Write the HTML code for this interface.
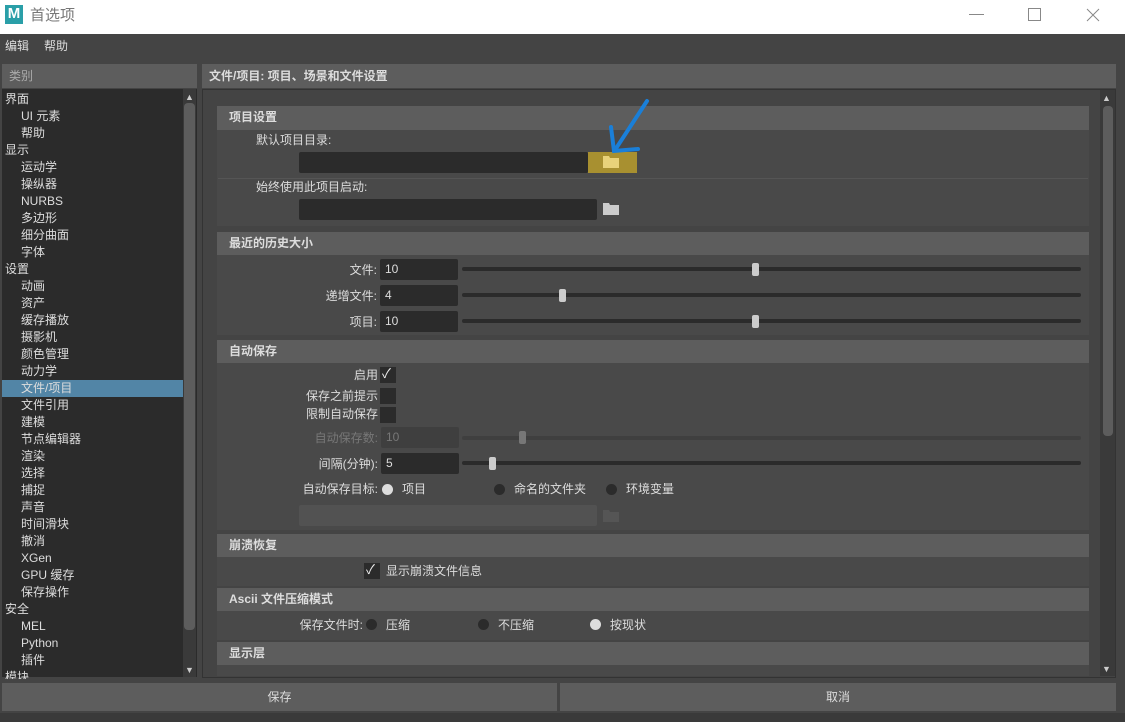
<!DOCTYPE html>
<html><head><meta charset="utf-8"><style>
*{margin:0;padding:0;box-sizing:border-box}
body{width:1125px;height:722px;background:#444;position:relative;overflow:hidden;font-family:"Liberation Sans","Noto Sans CJK SC",sans-serif;font-size:12px;color:#ddd}
.a{position:absolute}
.t{position:absolute;white-space:nowrap;line-height:14px}
.hdr{position:absolute;background:#5d5d5d;font-weight:bold;color:#ddd;padding-left:12px;line-height:23px}
.body{position:absolute;background:#494949}
.fld{position:absolute;background:#2b2b2b;border-radius:2px;padding-left:5px;line-height:21px;color:#ddd}
.trk{position:absolute;height:4px;background:#2b2b2b;border-radius:2px}
.th{position:absolute;width:7px;height:13px;background:#ccc;border-radius:2px}
.cb{position:absolute;width:16px;height:16px;background:#2b2b2b}
.rd{position:absolute;width:11px;height:11px;border-radius:50%;background:#2b2b2b}
.r{text-align:right}
</style></head><body>
<div class="a" style="left:0;top:0;width:1125px;height:34px;background:#fff"></div>
<div class="a" style="left:5px;top:5px;width:18px;height:19px;background:#2a9fa8;color:#fff;font-weight:bold;font-size:15px;line-height:17px;text-align:center">M</div>
<div class="t" style="left:30px;top:7px;font-size:15px;line-height:18px;color:#777">首选项</div>
<svg class="a" style="left:960px;top:0" width="165" height="34"><g stroke="#888" stroke-width="1" fill="none"><path d="M9 14.5 H24"/><rect x="68.5" y="8.5" width="12" height="12"/><path d="M127 9 L139 21 M139 9 L127 21"/></g></svg>
<div class="t" style="left:5px;top:39px">编辑</div><div class="t" style="left:44px;top:39px">帮助</div>

<div class="a" style="left:2px;top:64px;width:195px;height:24px;background:#5d5d5d"></div>
<div class="t" style="left:9px;top:69px;color:#aaa">类别</div>
<div class="a" style="left:2px;top:89px;width:195px;height:588px;background:#2b2b2b"></div>
<div class="a" style="left:2px;top:380px;width:181px;height:17px;background:#5285a6"></div>
<div class="a" style="left:183px;top:89px;width:13px;height:588px;background:#3a3a3a"></div>
<div class="a" style="left:184px;top:103px;width:11px;height:527px;background:#5d5d5d;border-radius:4px"></div>
<div class="t" style="left:185px;top:90px;font-size:9px;color:#ccc">▲</div>
<div class="t" style="left:185px;top:663px;font-size:9px;color:#ccc">▼</div>
<div id="list"></div>

<div class="a" style="left:202px;top:64px;width:914px;height:24px;background:#5d5d5d"></div>
<div class="t" style="left:209px;top:69px;font-weight:bold">文件/项目: 项目、场景和文件设置</div>
<div class="a" style="left:202px;top:89px;width:914px;height:589px;border:1px solid #333;background:#444"></div>
<div class="a" style="left:1100px;top:90px;width:15px;height:586px;background:#3a3a3a"></div>
<div class="a" style="left:1103px;top:106px;width:10px;height:330px;background:#5d5d5d;border-radius:4px"></div>
<div class="t" style="left:1102px;top:91px;font-size:9px;color:#ccc">▲</div>
<div class="t" style="left:1102px;top:662px;font-size:9px;color:#ccc">▼</div>

<div class="hdr" style="left:217px;top:106px;width:872px;height:24px">项目设置</div>
<div class="body" style="left:217px;top:130px;width:872px;height:96px"></div>
<div class="t" style="left:256px;top:133px">默认项目目录:</div>
<div class="fld" style="left:299px;top:152px;width:289px;height:21px"></div>
<div class="a" style="left:588px;top:152px;width:49px;height:21px;background:#a89030"></div>
<svg class="a" style="left:603px;top:154px" width="17" height="15"><path d="M0 2 H6 L7 4 H16 V14 H0 Z" fill="#e8d27a"/></svg>
<div class="a" style="left:218px;top:178px;width:870px;height:1px;background:#555"></div>
<div class="t" style="left:256px;top:180px">始终使用此项目启动:</div>
<div class="fld" style="left:299px;top:199px;width:298px;height:21px"></div>
<svg class="a" style="left:603px;top:201px" width="17" height="15"><path d="M0 2 H6 L7 4 H16 V14 H0 Z" fill="#ccc"/></svg>

<div class="hdr" style="left:217px;top:232px;width:872px;height:23px">最近的历史大小</div>
<div class="body" style="left:217px;top:255px;width:872px;height:80px"></div>
<div class="t r" style="left:300px;top:263px;width:77px">文件:</div>
<div class="fld" style="left:380px;top:259px;width:78px;height:21px">10</div>
<div class="trk" style="left:462px;top:267px;width:619px"></div><div class="th" style="left:752px;top:263px"></div>
<div class="t r" style="left:300px;top:289px;width:77px">递增文件:</div>
<div class="fld" style="left:380px;top:285px;width:78px;height:21px">4</div>
<div class="trk" style="left:462px;top:293px;width:619px"></div><div class="th" style="left:559px;top:289px"></div>
<div class="t r" style="left:300px;top:315px;width:77px">项目:</div>
<div class="fld" style="left:380px;top:311px;width:78px;height:21px">10</div>
<div class="trk" style="left:462px;top:319px;width:619px"></div><div class="th" style="left:752px;top:315px"></div>

<div class="hdr" style="left:217px;top:340px;width:872px;height:23px">自动保存</div>
<div class="body" style="left:217px;top:363px;width:872px;height:167px"></div>
<div class="t r" style="left:280px;top:368px;width:98px">启用</div>
<div class="cb" style="left:380px;top:367px"></div><div class="t" style="left:382px;top:367px;font-size:13px;color:#eee">✓</div>
<div class="t r" style="left:280px;top:389px;width:98px">保存之前提示</div>
<div class="cb" style="left:380px;top:388px"></div>
<div class="t r" style="left:280px;top:407px;width:98px">限制自动保存</div>
<div class="cb" style="left:380px;top:407px"></div>
<div class="t r" style="left:280px;top:431px;width:98px;color:#777">自动保存数:</div>
<div class="fld" style="left:381px;top:427px;width:78px;height:21px;background:#3f3f3f;color:#777">10</div>
<div class="trk" style="left:462px;top:436px;width:619px;background:#3f3f3f"></div><div class="th" style="left:519px;top:431px;background:#777"></div>
<div class="t r" style="left:280px;top:457px;width:98px">间隔(分钟):</div>
<div class="fld" style="left:381px;top:453px;width:78px;height:21px">5</div>
<div class="trk" style="left:462px;top:461px;width:619px"></div><div class="th" style="left:489px;top:457px"></div>
<div class="t r" style="left:280px;top:482px;width:98px">自动保存目标:</div>
<div class="rd" style="left:382px;top:484px;background:#ddd"></div><div class="t" style="left:402px;top:482px">项目</div>
<div class="rd" style="left:494px;top:484px"></div><div class="t" style="left:514px;top:482px">命名的文件夹</div>
<div class="rd" style="left:606px;top:484px"></div><div class="t" style="left:626px;top:482px">环境变量</div>
<div class="fld" style="left:299px;top:505px;width:298px;height:21px;background:#525252"></div>
<svg class="a" style="left:603px;top:508px" width="17" height="15"><path d="M0 2 H6 L7 4 H16 V14 H0 Z" fill="#555"/></svg>

<div class="hdr" style="left:217px;top:534px;width:872px;height:23px">崩溃恢复</div>
<div class="body" style="left:217px;top:557px;width:872px;height:29px"></div>
<div class="cb" style="left:364px;top:563px"></div><div class="t" style="left:366px;top:563px;font-size:13px;color:#eee">✓</div>
<div class="t" style="left:386px;top:564px">显示崩溃文件信息</div>

<div class="hdr" style="left:217px;top:588px;width:872px;height:23px">Ascii 文件压缩模式</div>
<div class="body" style="left:217px;top:611px;width:872px;height:29px"></div>
<div class="t r" style="left:260px;top:618px;width:103px">保存文件时:</div>
<div class="rd" style="left:366px;top:619px"></div><div class="t" style="left:386px;top:618px">压缩</div>
<div class="rd" style="left:478px;top:619px"></div><div class="t" style="left:498px;top:618px">不压缩</div>
<div class="rd" style="left:590px;top:619px;background:#ddd"></div><div class="t" style="left:610px;top:618px">按现状</div>

<div class="hdr" style="left:217px;top:642px;width:872px;height:23px">显示层</div>
<div class="body" style="left:217px;top:665px;width:872px;height:11px"></div>

<div class="a" style="left:2px;top:683px;width:555px;height:28px;background:#5d5d5d;text-align:center;line-height:28px">保存</div>
<div class="a" style="left:560px;top:683px;width:556px;height:28px;background:#5d5d5d;text-align:center;line-height:28px">取消</div>
<div class="a" style="left:0;top:713px;width:1125px;height:9px;background:#3a3a3a"></div>

<svg class="a" style="left:0;top:0" width="1125" height="722"><g stroke="#1a7fd8" stroke-width="4" stroke-linecap="round" fill="none"><path d="M647 101 L615 150"/><path d="M611 127 L614 151 L638 149"/></g></svg>
<script>
var items=[["界面",0],["UI 元素",1],["帮助",1],["显示",0],["运动学",1],["操纵器",1],["NURBS",1],["多边形",1],["细分曲面",1],["字体",1],["设置",0],["动画",1],["资产",1],["缓存播放",1],["摄影机",1],["颜色管理",1],["动力学",1],["文件/项目",1],["文件引用",1],["建模",1],["节点编辑器",1],["渲染",1],["选择",1],["捕捉",1],["声音",1],["时间滑块",1],["撤消",1],["XGen",1],["GPU 缓存",1],["保存操作",1],["安全",0],["MEL",1],["Python",1],["插件",1],["模块",0]];
var h="";items.forEach(function(it,i){var y=92+i*17;h+='<div class="t" style="left:'+(it[1]?21:5)+'px;top:'+y+'px;'+(i==34?'height:9px;overflow:hidden':'')+'">'+it[0]+'</div>';});
document.getElementById("list").innerHTML=h;
</script>
</body></html>
